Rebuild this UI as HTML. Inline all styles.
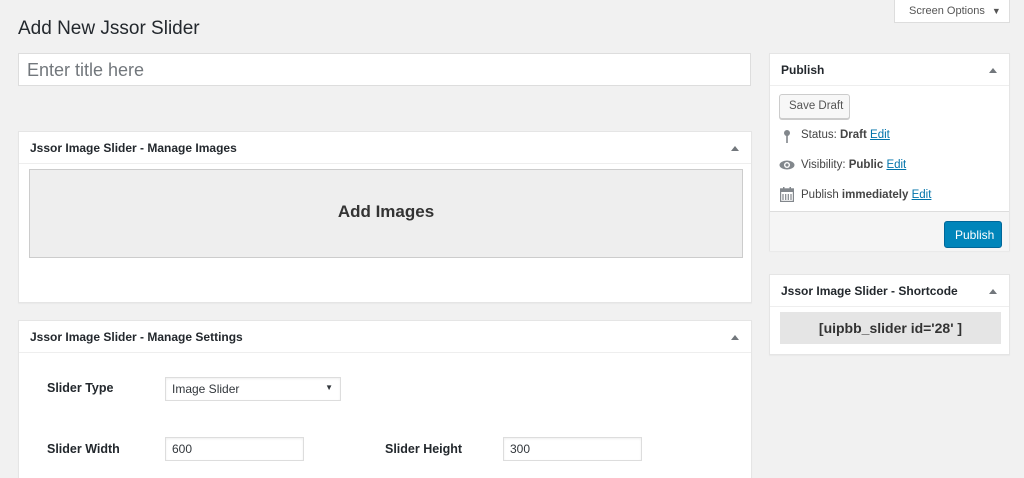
<!DOCTYPE html>
<html><head><meta charset="utf-8"><style>
*{box-sizing:border-box;margin:0;padding:0}
html,body{width:1024px;height:478px;overflow:hidden}
body{background:#f1f1f1;font-family:"Liberation Sans",sans-serif;color:#23282d;position:relative;font-size:13px}
.a{position:absolute}
.box{position:absolute;background:#fff;border:1px solid #e5e5e5;box-shadow:0 1px 1px rgba(0,0,0,.04)}
.hd{height:32px;border-bottom:1px solid #eee;font-size:12px;font-weight:bold;padding:9px 11px;color:#23282d}
.tri{position:absolute;right:12px;top:14px;width:0;height:0;border-left:4px solid transparent;border-right:4px solid transparent;border-bottom:5px solid #72777c}
.inp{position:absolute;background:#fff;border:1px solid #ddd;box-shadow:inset 0 1px 2px rgba(0,0,0,.07);font-size:12px;color:#32373c;padding:4px 6px}
.lbl{position:absolute;font-weight:bold;font-size:12.5px;color:#23282d}
a{color:#0073aa;text-decoration:underline}
.row{position:absolute;left:10px;font-size:11.5px;color:#444}
</style></head><body>
<div class="a" style="left:894px;top:0;width:116px;height:23px;background:#fff;border:1px solid #ddd;border-top:none;font-size:11px;color:#555;padding:5px 0 0 14px">Screen Options <span style="font-size:9px;margin-left:4px">▼</span></div>
<div class="a" style="left:18px;top:18px;font-size:19px;color:#23282d">Add New Jssor Slider</div>
<div class="a" style="left:18px;top:53px;width:733px;height:33px;background:#fff;border:1px solid #ddd;font-size:18px;color:#72777c;padding:6px 8px">Enter title here</div>

<div class="box" style="left:18px;top:131px;width:734px;height:172px">
<div class="hd">Jssor Image Slider - Manage Images</div><div class="tri"></div>
<div class="a" style="left:10px;top:37px;width:714px;height:89px;background:#eee;border:1px solid #ccc;text-align:center;font-weight:bold;font-size:17px;color:#333;padding-top:32px">Add Images</div>
</div>

<div class="box" style="left:18px;top:320px;width:734px;height:170px">
<div class="hd">Jssor Image Slider - Manage Settings</div><div class="tri"></div>
<div class="lbl" style="left:28px;top:60px">Slider Type</div>
<div class="inp" style="left:146px;top:56px;width:176px;height:24px">Image Slider<span style="position:absolute;right:7px;top:5px;font-size:8px">▼</span></div>
<div class="lbl" style="left:28px;top:121px">Slider Width</div>
<div class="inp" style="left:146px;top:116px;width:139px;height:24px">600</div>
<div class="lbl" style="left:366px;top:121px">Slider Height</div>
<div class="inp" style="left:484px;top:116px;width:139px;height:24px">300</div>
</div>

<div class="box" style="left:769px;top:53px;width:241px;height:198px">
<div class="hd">Publish</div><div class="tri"></div>
<div class="a" style="left:9px;top:40px;width:71px;height:25px;background:#f7f7f7;border:1px solid #ccc;border-radius:3px;box-shadow:0 1px 0 #ccc;font-size:11.5px;color:#555;padding:5px 0 0 9px">Save Draft</div>
<svg class="a" style="left:12px;top:75px" width="10" height="15"><circle cx="5" cy="4" r="3" fill="#82878c"/><rect x="4.2" y="6" width="1.6" height="8" fill="#82878c"/></svg>
<div class="row" style="left:31px;top:75px">Status: <b>Draft</b> <a>Edit</a></div>
<svg class="a" style="left:9px;top:106px" width="16" height="10"><ellipse cx="8" cy="5" rx="7.5" ry="4.5" fill="#82878c"/><circle cx="8" cy="5" r="3" fill="#fff"/><circle cx="8" cy="5" r="1.6" fill="#82878c"/></svg>
<div class="row" style="left:31px;top:105px">Visibility: <b>Public</b> <a>Edit</a></div>
<svg class="a" style="left:10px;top:133px" width="14" height="15"><rect x="0.5" y="2" width="13" height="12.5" fill="none" stroke="#82878c" stroke-width="1.4"/><rect x="0.5" y="2" width="13" height="3" fill="#82878c"/><rect x="3" y="0" width="1.5" height="4" fill="#82878c"/><rect x="9.5" y="0" width="1.5" height="4" fill="#82878c"/><path d="M3 7v6M5.7 7v6M8.3 7v6M11 7v6" stroke="#82878c" stroke-width="1.2"/></svg>
<div class="row" style="left:31px;top:135px">Publish <b>immediately</b> <a>Edit</a></div>
<div class="a" style="left:0;top:157px;width:239px;height:40px;background:#f5f5f5;border-top:1px solid #ddd"></div>
<div class="a" style="left:174px;top:167px;width:58px;height:27px;background:#0085ba;border:1px solid #006799;border-radius:3px;color:#fff;font-size:12px;padding:6px 0 0 10px">Publish</div>
</div>

<div class="box" style="left:769px;top:274px;width:241px;height:81px">
<div class="hd">Jssor Image Slider - Shortcode</div><div class="tri"></div>
<div class="a" style="left:10px;top:37px;width:221px;height:32px;background:#e5e5e5;text-align:center;font-weight:bold;font-size:14px;color:#333;padding-top:8px">[uipbb_slider id='28' ]</div>
</div>
</body></html>
